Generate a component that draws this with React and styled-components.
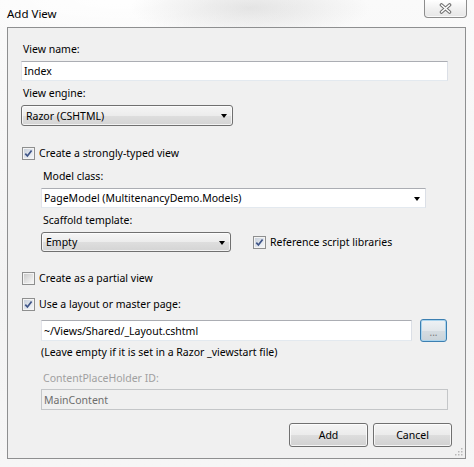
import React from "react";
import styled, { createGlobalStyle } from "styled-components";

const GlobalStyle = createGlobalStyle`
  html, body {
    margin: 0;
    padding: 0;
    background: #ffffff;
  }
  body {
    font-family: "Segoe UI", "Noto Sans", "Open Sans", sans-serif;
    font-size: 10.5px;
    color: #000;
  }
`;

const WindowStyled = styled.div`
  width: 474px;
  height: 467px;
  box-sizing: border-box;
  display: flex;
  flex-direction: column;
  background:
    radial-gradient(ellipse 120px 30px at 250px 8px, rgba(200, 200, 200, 0.45), transparent),
    radial-gradient(ellipse 200px 40px at 120px 0px, rgba(255, 255, 255, 0.9), transparent),
    linear-gradient(#fafafa, #f3f3f3 60%, #f6f6f6);
`;

const TitleBar = styled.div`
  height: 27px;
  flex: none;
  display: flex;
  justify-content: space-between;
  align-items: flex-start;
  padding-left: 7px;
`;

const Title = styled.div`
  padding-top: 5px;
  line-height: 17px;
  font-size: 11.5px;
  color: #000;
`;

const CloseButton = styled.div`
  width: 43px;
  height: 18px;
  margin-right: 7px;
  box-sizing: border-box;
  display: flex;
  align-items: center;
  justify-content: center;
  border: 1px solid #8d8d8d;
  border-top: none;
  border-radius: 0 0 4px 4px;
  background: linear-gradient(#ffffff, #f1f1f1 50%, #e6e6e6);
  box-shadow: inset 0 -1px 0 rgba(255, 255, 255, 0.8);
`;

const Panel = styled.div`
  flex: 1;
  margin: 0 8px 8px 7px;
  border: 1px solid #8e8f90;
  background: #f0f0f0;
  padding: 13px 17px 11px 13px;
  display: flex;
  flex-direction: column;
  position: relative;
`;

const Label = styled.div`
  height: 16px;
  line-height: 16px;
  padding-left: 2px;
  margin-top: ${(p) => p.$top || 0}px;
  color: ${(p) => (p.$disabled ? "#a0a0a0" : "#000")};
  white-space: nowrap;
`;

const Note = styled(Label)`
  padding-left: 0;
`;

const TextBox = styled.div`
  height: ${(p) => p.$h || 20}px;
  width: ${(p) => (p.$w ? `${p.$w}px` : "auto")};
  flex: ${(p) => (p.$grow ? 1 : "none")};
  margin-top: ${(p) => p.$top || 0}px;
  box-sizing: border-box;
  display: flex;
  align-items: center;
  justify-content: space-between;
  padding: 0 5px 0 2px;
  border: 1px solid;
  border-color: ${(p) =>
    p.$disabled ? "#c4c6c8" : "#abadb3 #dbdfe6 #e3e9ef #e2e3ea"};
  background: ${(p) => (p.$disabled ? "#f0f0f0" : "#ffffff")};
  color: ${(p) => (p.$disabled ? "#6d6d6d" : "#000")};
  white-space: nowrap;
`;

const Select = styled.div`
  height: ${(p) => p.$h || 21}px;
  width: ${(p) => p.$w}px;
  margin-top: ${(p) => p.$top || 0}px;
  box-sizing: border-box;
  display: flex;
  align-items: center;
  justify-content: space-between;
  padding: 0 5px 0 4px;
  border: 1px solid #707070;
  border-radius: 3px;
  background: linear-gradient(#f5f5f5, #ececec 50%, #dedede 51%, #d4d4d4);
  box-shadow: inset 0 0 0 1px rgba(255, 255, 255, 0.7);
  white-space: nowrap;
`;

const Arrow = styled.span`
  width: 0;
  height: 0;
  border-left: 3.5px solid transparent;
  border-right: 3.5px solid transparent;
  border-top: 4px solid #000;
  margin-top: 1px;
`;

const CheckRow = styled.div`
  display: flex;
  align-items: center;
  gap: 4px;
  height: 16px;
  margin-top: ${(p) => p.$top || 0}px;
  margin-left: ${(p) => p.$left ?? 1}px;
  white-space: nowrap;
`;

const Indent = styled.div`
  display: flex;
  flex-direction: column;
  margin-left: 20px;
`;

const Row = styled.div`
  display: flex;
  align-items: center;
  gap: ${(p) => p.$gap || 0}px;
  margin-top: ${(p) => p.$top || 0}px;
`;

const BrowseButton = styled.div`
  width: 27px;
  height: 23px;
  margin-right: 1px;
  box-sizing: border-box;
  display: flex;
  align-items: center;
  justify-content: center;
  border: 1px solid #3c7fb1;
  border-radius: 3px;
  background: linear-gradient(#eef2f5, #e2e7eb 50%, #d5dce1 51%, #cad3d9);
  box-shadow: inset 0 0 0 1px #a9d4ee;
  color: #7c7c7c;
  font-size: 10px;
  line-height: 10px;
  padding-top: 3px;
`;

const ButtonRow = styled.div`
  margin-top: auto;
  margin-right: -4px;
  display: flex;
  justify-content: flex-end;
  gap: 5px;
`;

const Button = styled.div`
  width: 79px;
  height: 24px;
  box-sizing: border-box;
  display: flex;
  align-items: center;
  justify-content: center;
  border: 1px solid #707070;
  border-radius: 3px;
  background: linear-gradient(#f4f4f4, #ebebeb 50%, #dddddd 51%, #d1d1d1);
  box-shadow: inset 0 0 0 1px rgba(255, 255, 255, 0.75);
`;

const Grip = styled.svg`
  position: absolute;
  right: 2px;
  bottom: 2px;
`;

const CheckBox = ({ checked }) => (
  <svg width="13" height="13" viewBox="0 0 13 13">
    <defs>
      <linearGradient id={checked ? "cbOn" : "cbOff"} x1="0" y1="0" x2="1" y2="1">
        <stop offset="0" stopColor={checked ? "#c9d1dc" : "#cbcbcb"} />
        <stop offset="1" stopColor={checked ? "#f4f6f9" : "#f7f7f7"} />
      </linearGradient>
    </defs>
    <rect x="0.5" y="0.5" width="12" height="12" fill="#f4f4f4" stroke="#8e8f8f" />
    <rect x="2" y="2" width="9" height="9" fill={`url(#${checked ? "cbOn" : "cbOff"})`} />
    {checked && (
      <path
        d="M3.3 6.6 L5.4 9 L9.6 3.4"
        fill="none"
        stroke="#3f5588"
        strokeWidth="1.7"
      />
    )}
  </svg>
);

const CloseGlyph = () => (
  <svg width="13" height="11" viewBox="0 0 13 11">
    <path
      d="M2.5 2 L10.5 9 M10.5 2 L2.5 9"
      stroke="#6f6f6f"
      strokeWidth="3.6"
      strokeLinecap="round"
    />
    <path
      d="M2.5 2 L10.5 9 M10.5 2 L2.5 9"
      stroke="#ffffff"
      strokeWidth="1.6"
      strokeLinecap="round"
    />
  </svg>
);

const App = () => {
  return (
    <>
      <GlobalStyle />
      <WindowStyled>
        <TitleBar>
          <Title>Add View</Title>
          <CloseButton>
            <CloseGlyph />
          </CloseButton>
        </TitleBar>

        <Panel>
          <Label>View name:</Label>
          <TextBox $top={4}>Index</TextBox>

          <Label $top={4}>View engine:</Label>
          <Select $top={4} $w={212}>
            Razor (CSHTML)
            <Arrow />
          </Select>

          <CheckRow $top={19}>
            <CheckBox checked />
            Create a strongly-typed view
          </CheckRow>

          <Indent>
            <Label $top={7}>Model class:</Label>
            <TextBox $top={4} $w={385}>
              PageModel (MultitenancyDemo.Models)
              <Arrow />
            </TextBox>

            <Label $top={4}>Scaffold template:</Label>
            <Row $top={4} $gap={22}>
              <Select $h={20} $w={190}>
                Empty
                <Arrow />
              </Select>
              <CheckRow $left={0}>
                <CheckBox checked />
                Reference script libraries
              </CheckRow>
            </Row>
          </Indent>

          <CheckRow $top={18}>
            <CheckBox />
            Create as a partial view
          </CheckRow>

          <CheckRow $top={10}>
            <CheckBox checked />
            Use a layout or master page:
          </CheckRow>

          <Indent>
            <Row $top={7} $gap={8}>
              <TextBox $h={21} $grow>
                ~/Views/Shared/_Layout.cshtml
              </TextBox>
              <BrowseButton>...</BrowseButton>
            </Row>
            <Note $top={2}>
              (Leave empty if it is set in a Razor _viewstart file)
            </Note>

            <Label $top={10} $disabled>
              ContentPlaceHolder ID:
            </Label>
            <TextBox $top={3} $h={21} $disabled>
              MainContent
            </TextBox>
          </Indent>

          <ButtonRow>
            <Button>Add</Button>
            <Button>Cancel</Button>
          </ButtonRow>

          <Grip width="8" height="8" viewBox="0 0 8 8">
            <g fill="#b8b8b8">
              <rect x="6" y="0" width="1.5" height="1.5" />
              <rect x="3" y="3" width="1.5" height="1.5" />
              <rect x="6" y="3" width="1.5" height="1.5" />
              <rect x="0" y="6" width="1.5" height="1.5" />
              <rect x="3" y="6" width="1.5" height="1.5" />
              <rect x="6" y="6" width="1.5" height="1.5" />
            </g>
          </Grip>
        </Panel>
      </WindowStyled>
    </>
  );
};

export default App;
